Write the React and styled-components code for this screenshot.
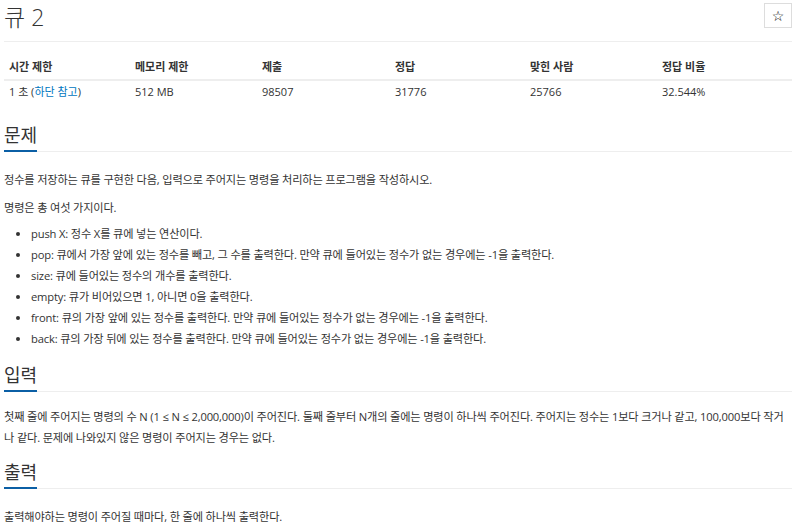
import React from 'react'
import styled, { createGlobalStyle } from 'styled-components'

const GlobalStyle = createGlobalStyle`
  body {
    margin: 0;
    background: #fff;
    color: #333;
    font-family: "Open Sans", "Noto Sans CJK KR", sans-serif;
  }
`;

const Page = styled.div`
  width: 788px;
  padding: 0 4px;
`;

const Header = styled.div`
  height: 41px;
  display: flex;
  justify-content: space-between;
  align-items: flex-start;
  border-bottom: 1px solid #eee;
`;

const Title = styled.h1`
  margin: 0;
  font-size: 23px;
  font-weight: 300;
  line-height: 34px;
`;

const StarButton = styled.button`
  margin-top: 3px;
  width: 28px;
  height: 25px;
  padding: 0;
  border: 1px solid #ddd;
  background: #fff;
  color: #000;
  font-size: 14px;
  font-family: "DejaVu Sans", sans-serif;
`;

const Table = styled.div`
  margin-top: 17px;
  display: grid;
  grid-template-columns: 126px 127px 133px 135px 132px 1fr;
  font-size: 11px;
`;

const Th = styled.div`
  padding: 0 5px 4px;
  line-height: 16px;
  font-weight: 700;
  border-bottom: 2px solid #eee;
`;

const Td = styled.div`
  padding: 3px 5px;
  line-height: 16px;
`;

const Link = styled.a`
  color: #0076c0;
  text-decoration: none;
`;

const Section = styled.section`
  margin-top: ${p => p.gap}px;
`;

const SectionHead = styled.div`
  display: flex;
  border-bottom: 1px solid #eee;
`;

const SectionTitle = styled.h2`
  margin: 0 0 -1px;
  padding-bottom: 3px;
  font-size: 18px;
  font-weight: 400;
  line-height: 24px;
  border-bottom: 2px solid #0b5fa5;
`;

const Body = styled.div`
  padding-top: ${p => p.top}px;
  font-size: 11.2px;
  line-height: 21px;
  letter-spacing: -0.16px;
  word-break: break-all;
`;

const P = styled.p`
  margin: 0 0 7px;
  &:last-child {
    margin-bottom: 0;
  }
`;

const List = styled.ul`
  margin: -2px 0 0;
  padding-left: 27px;
`;

const Item = styled.li`
  line-height: 21px;
`;

const stats = [
  ['시간 제한', '메모리 제한', '제출', '정답', '맞힌 사람', '정답 비율'],
  ['512 MB', '98507', '31776', '25766', '32.544%'],
]

const commands = [
  'push X: 정수 X를 큐에 넣는 연산이다.',
  'pop: 큐에서 가장 앞에 있는 정수를 빼고, 그 수를 출력한다. 만약 큐에 들어있는 정수가 없는 경우에는 -1을 출력한다.',
  'size: 큐에 들어있는 정수의 개수를 출력한다.',
  'empty: 큐가 비어있으면 1, 아니면 0을 출력한다.',
  'front: 큐의 가장 앞에 있는 정수를 출력한다. 만약 큐에 들어있는 정수가 없는 경우에는 -1을 출력한다.',
  'back: 큐의 가장 뒤에 있는 정수를 출력한다. 만약 큐에 들어있는 정수가 없는 경우에는 -1을 출력한다.',
]

export default function App() {
  return (
    <Page>
      <GlobalStyle />
      <Header>
        <Title>큐 2</Title>
        <StarButton>☆</StarButton>
      </Header>

      <Table>
        {stats[0].map(h => <Th key={h}>{h}</Th>)}
        <Td>1 초 (<Link>하단 참고</Link>)</Td>
        {stats[1].map(v => <Td key={v}>{v}</Td>)}
      </Table>

      <Section gap={20}>
        <SectionHead><SectionTitle>문제</SectionTitle></SectionHead>
        <Body top={17}>
          <P>정수를 저장하는 큐를 구현한 다음, 입력으로 주어지는 명령을 처리하는 프로그램을 작성하시오.</P>
          <P>명령은 총 여섯 가지이다.</P>
          <List>
            {commands.map(c => <Item key={c}>{c}</Item>)}
          </List>
        </Body>
      </Section>

      <Section gap={14}>
        <SectionHead><SectionTitle>입력</SectionTitle></SectionHead>
        <Body top={14}>
          <P>첫째 줄에 주어지는 명령의 수 N (1 ≤ N ≤ 2,000,000)이 주어진다. 둘째 줄부터 N개의 줄에는 명령이 하나씩 주어진다. 주어지는 정수는 1보다 크거나 같고, 100,000보다 작거나 같다. 문제에 나와있지 않은 명령이 주어지는 경우는 없다.</P>
        </Body>
      </Section>

      <Section gap={12}>
        <SectionHead><SectionTitle>출력</SectionTitle></SectionHead>
        <Body top={17}>
          <P>출력해야하는 명령이 주어질 때마다, 한 줄에 하나씩 출력한다.</P>
        </Body>
      </Section>
    </Page>
  )
}
